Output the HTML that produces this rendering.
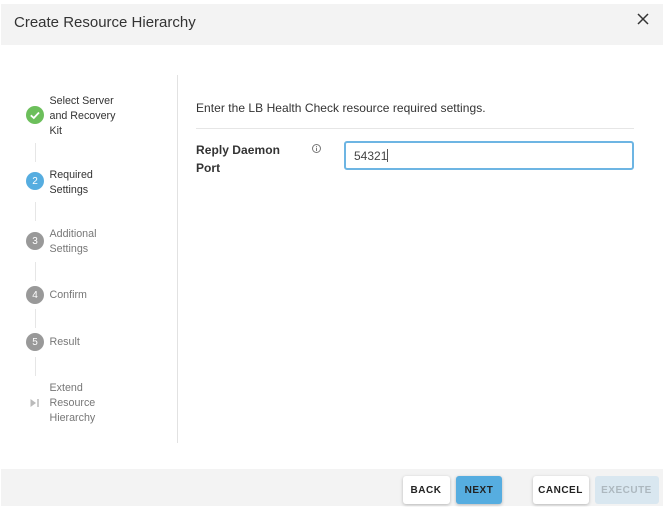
<!DOCTYPE html>
<html><head><meta charset="utf-8"><style>
html,body{margin:0;padding:0;background:#fff}
body{width:670px;height:507px;position:relative;overflow:hidden;font-family:"Liberation Sans",sans-serif;color:#333}
.a{position:absolute}
.t{position:absolute;font-size:10.7px;line-height:15px;left:49.5px;white-space:nowrap;color:#333}
.g{color:#777}
.c{position:absolute;left:26px;width:18px;height:18px;border-radius:50%;background:#999;color:#fff;font-size:10px;line-height:19px;text-align:center}
.l{position:absolute;left:34.5px;width:1.5px;height:19px;background:#e6e6e6}
.b{position:absolute;top:475.5px;height:28px;border-radius:3px;background:#fff;box-shadow:0 1px 3px rgba(0,0,0,.25);font-size:10px;font-weight:bold;letter-spacing:.5px;line-height:29px;text-align:center;color:#222}
</style></head><body>
<div class="a" style="left:1px;top:4px;width:662px;height:41px;background:#f3f3f3"></div>
<div class="a" style="left:14px;top:14px;font-size:15px;line-height:18px;color:#333">Create Resource Hierarchy</div>
<svg class="a" style="left:637px;top:12.5px" width="12" height="12" viewBox="0 0 12 12"><path d="M1 1L11 11M11 1L1 11" stroke="#333" stroke-width="1.5" fill="none"/></svg>

<div class="a" style="left:177px;top:75px;width:1px;height:368px;background:#e2e2e2"></div>

<div class="t" style="top:94px">Select Server<br>and Recovery<br>Kit</div>
<div class="c" style="top:106px;background:#6cbf5b"></div>
<svg class="a" style="left:26px;top:106px" width="18" height="18" viewBox="0 0 18 18"><path d="M4.8 9.3L7.8 12L13 6.5" stroke="#fff" stroke-width="1.8" fill="none"/></svg>
<div class="l" style="top:143px"></div>
<div class="t" style="top:168px">Required<br>Settings</div>
<div class="c" style="top:172px;background:#56ade0">2</div>
<div class="l" style="top:202px"></div>
<div class="t g" style="top:227px">Additional<br>Settings</div>
<div class="c" style="top:232px">3</div>
<div class="l" style="top:262px"></div>
<div class="t g" style="top:288px">Confirm</div>
<div class="c" style="top:286px">4</div>
<div class="l" style="top:309px"></div>
<div class="t g" style="top:335px">Result</div>
<div class="c" style="top:333px">5</div>
<div class="l" style="top:357px"></div>
<div class="t g" style="top:381px">Extend<br>Resource<br>Hierarchy</div>
<svg class="a" style="left:29px;top:398px" width="11" height="10" viewBox="0 0 11 10"><path d="M1.5 1V9L7 5Z" fill="#bbb"/><rect x="8.5" y="1" width="1" height="8" fill="#999"/></svg>

<div class="a" style="left:196px;top:100.5px;font-size:12px;letter-spacing:.04px;line-height:15px;color:#333;white-space:nowrap">Enter the LB Health Check resource required settings.</div>
<div class="a" style="left:196px;top:128px;width:438px;height:1px;background:#e6e6e6"></div>
<div class="a" style="left:196px;top:141px;font-size:12px;font-weight:bold;line-height:18px;color:#333;letter-spacing:.05px">Reply Daemon<br>Port</div>
<svg class="a" style="left:311px;top:143px" width="11" height="11" viewBox="0 0 11 11"><circle cx="5.5" cy="5.5" r="4" stroke="#777" fill="none"/><path d="M5.5 3V3.9M5.5 4.8V8" stroke="#777" fill="none"/></svg>
<div class="a" style="left:344px;top:141px;width:286px;height:25px;border:2px solid #6db5e3;border-radius:3px;background:#fff"></div>
<div class="a" style="left:354px;top:148.5px;font-size:12px;line-height:15px;color:#444">54321</div>
<div class="a" style="left:387px;top:149px;width:1px;height:13px;background:#555"></div>

<div class="a" style="left:1px;top:469px;width:662px;height:37px;background:#f3f3f3"></div>
<div class="b" style="left:402.5px;width:47px">BACK</div>
<div class="b" style="left:456px;width:46px;background:#56ade0">NEXT</div>
<div class="b" style="left:532.5px;width:56px">CANCEL</div>
<div class="b" style="left:594.5px;width:64px;background:#d9e7f0;color:#adb8bf;box-shadow:none">EXECUTE</div>
</body></html>
